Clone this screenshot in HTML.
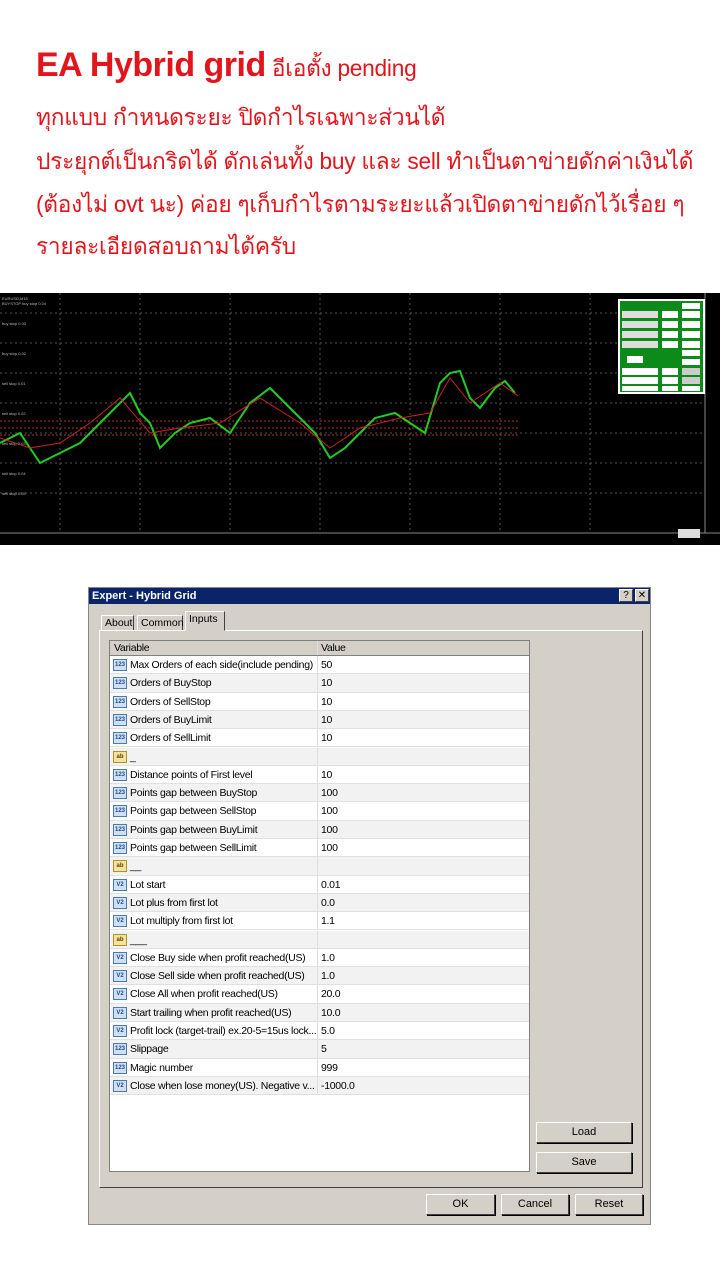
<!DOCTYPE html>
<html><head><meta charset="utf-8"><style>
*{margin:0;padding:0;box-sizing:border-box}
body{width:720px;height:1280px;background:#fff;position:relative;overflow:hidden;font-family:"Liberation Sans","DejaVu Sans",sans-serif}
.t{position:absolute;left:36px;color:#e3151c;font-size:22.7px;white-space:nowrap;letter-spacing:-0.25px}
.dlg{position:absolute;left:88px;top:587px;width:563px;height:638px;background:#d4d0c8;border:1px solid #888}
.tb{position:absolute;left:0;top:0;right:0;height:16px;background:#0a246a;color:#fff;font-weight:bold;font-size:11px;padding:2px 3px}
.tbb{position:absolute;top:1px;width:14px;height:13px;background:#d4d0c8;border:1px solid #fff;border-right-color:#404040;border-bottom-color:#404040;color:#000;font-size:10px;text-align:center;line-height:11px}
.tab{position:absolute;top:27px;height:16px;font-size:10.5px;padding:1px 3px;border:1px solid #fff;border-right-color:#404040;border-bottom:none;white-space:nowrap}
.panel{position:absolute;left:10px;top:42px;width:544px;height:558px;border:1px solid #fff;border-right-color:#404040;border-bottom-color:#404040}
.grid{position:absolute;left:20px;top:52px;width:421px;height:532px;background:#fff;border:1px solid #808080;overflow:hidden}
.row{position:absolute;left:0;width:419px;height:18.3px;border-bottom:1px solid #e0e0e0;font-size:10.5px;line-height:18px;white-space:nowrap;letter-spacing:-0.3px}
.row .v{position:absolute;left:0;width:208px;padding-left:20px;border-right:1px solid #ddd;height:100%;overflow:hidden}
.row .w{position:absolute;left:211px}
.ic{position:absolute;left:3px;top:3px;width:14px;height:12px;border:1px solid #4a7ab0;background:#cfe0f4;font-size:6px;line-height:10px;color:#1a4a8a;text-align:center;font-weight:bold;letter-spacing:0}
.ic.ab{background:#f4e39a;border-color:#b09030;color:#604000}
.btn{position:absolute;height:21px;background:#d4d0c8;border:1px solid #fff;border-right-color:#404040;border-bottom-color:#404040;box-shadow:1px 1px 0 #000;font-size:11px;text-align:center;line-height:19px}
</style></head><body>
<div class="t" style="top:46px;"><b style="font-size:34px;letter-spacing:-0.5px">EA Hybrid grid</b> อีเอตั้ง pending</div>
<div class="t" style="top:99px">ทุกแบบ กำหนดระยะ ปิดกำไรเฉพาะส่วนได้</div>
<div class="t" style="top:143px">ประยุกต์เป็นกริดได้ ดักเล่นทั้ง buy และ sell ทำเป็นตาข่ายดักค่าเงินได้</div>
<div class="t" style="top:186px">(ต้องไม่ ovt นะ) ค่อย ๆเก็บกำไรตามระยะแล้วเปิดตาข่ายดักไว้เรื่อย ๆ</div>
<div class="t" style="top:228px">รายละเอียดสอบถามได้ครับ</div>

<svg style="position:absolute;left:0;top:293px" width="720" height="252">
<rect width="720" height="252" fill="#000"/>
<g stroke="#555" stroke-dasharray="2,3" stroke-width="1">
<line x1="0" y1="20" x2="705" y2="20"/><line x1="0" y1="50" x2="705" y2="50"/><line x1="0" y1="80" x2="705" y2="80"/><line x1="0" y1="110" x2="705" y2="110"/><line x1="0" y1="140" x2="705" y2="140"/><line x1="0" y1="170" x2="705" y2="170"/><line x1="0" y1="200" x2="705" y2="200"/>
<line x1="60" y1="0" x2="60" y2="240"/><line x1="140" y1="0" x2="140" y2="240"/><line x1="230" y1="0" x2="230" y2="240"/><line x1="320" y1="0" x2="320" y2="240"/><line x1="410" y1="0" x2="410" y2="240"/><line x1="500" y1="0" x2="500" y2="240"/><line x1="590" y1="0" x2="590" y2="240"/>
</g>
<g fill="#bbb" font-size="4">
<text x="2" y="7">EURUSD,M15</text><text x="2" y="12">BUYSTOP buy stop 0.04</text><text x="2" y="32">buy stop 0.03</text><text x="2" y="62">buy stop 0.02</text><text x="2" y="92">sell stop 0.01</text><text x="2" y="122">sell stop 0.02</text><text x="2" y="152">sell stop 0.03</text><text x="2" y="182">sell stop 0.04</text><text x="2" y="202">sell stop 0.05</text>
</g>
<g stroke="#a33" stroke-dasharray="2,2"><line x1="0" y1="128" x2="520" y2="128"/><line x1="0" y1="135" x2="520" y2="135"/><line x1="0" y1="142" x2="520" y2="142"/></g>
<polyline fill="none" stroke="#2c2" stroke-width="2" points="0,150 20,140 40,170 60,160 80,150 100,130 115,115 130,100 140,120 150,130 160,155 175,140 190,130 210,125 230,140 250,110 270,95 285,110 300,125 315,140 330,165 345,155 360,140 375,125 395,120 410,130 425,140 440,90 450,80 460,78 470,105 480,115 495,95 505,88 515,100"/>
<polyline fill="none" stroke="#c22" stroke-width="1" points="0,145 30,155 60,150 90,130 120,105 150,140 180,135 220,130 260,105 300,130 330,155 360,135 400,125 430,120 450,85 470,110 500,90 518,103"/>
<rect x="705" y="0" width="15" height="252" fill="#000"/><line x1="705" y1="0" x2="705" y2="240" stroke="#888"/>
<line x1="0" y1="240" x2="720" y2="240" stroke="#888"/>
<rect x="618" y="6" width="87" height="95" fill="#fff"/><rect x="620" y="8" width="83" height="91" fill="#0c8a1a"/>
<g fill="#ddd"><rect x="622" y="18" width="36" height="7"/><rect x="622" y="28" width="36" height="7"/><rect x="622" y="38" width="36" height="7"/><rect x="622" y="48" width="36" height="7"/></g>
<g fill="#fff"><rect x="662" y="18" width="16" height="7"/><rect x="682" y="18" width="18" height="7"/><rect x="662" y="28" width="16" height="7"/><rect x="682" y="28" width="18" height="7"/><rect x="662" y="38" width="16" height="7"/><rect x="682" y="38" width="18" height="7"/><rect x="662" y="48" width="16" height="7"/><rect x="682" y="48" width="18" height="7"/><rect x="682" y="10" width="18" height="6"/><rect x="627" y="63" width="16" height="7"/><rect x="682" y="57" width="18" height="6"/><rect x="682" y="66" width="18" height="6"/>
<rect x="622" y="75" width="36" height="7"/><rect x="662" y="75" width="16" height="7"/><rect x="622" y="84" width="36" height="7"/><rect x="662" y="84" width="16" height="7"/><rect x="622" y="93" width="36" height="5"/><rect x="662" y="93" width="16" height="5"/><rect x="682" y="93" width="18" height="5"/></g>
<g fill="#ccc"><rect x="682" y="75" width="18" height="7"/><rect x="682" y="84" width="18" height="7"/></g>
<rect x="678" y="236" width="22" height="9" fill="#ddd"/>
</svg>

<div class="dlg">
<div class="tb">Expert - Hybrid Grid</div>
<div class="tbb" style="left:530px">?</div><div class="tbb" style="left:546px">✕</div>
<div class="tab" style="left:12px;width:33px">About</div>
<div class="tab" style="left:48px;width:46px">Common</div>
<div class="tab" style="left:96px;top:23px;height:20px;width:40px;background:#d4d0c8;z-index:2;border-bottom:1px solid #d4d0c8">Inputs</div>
<div class="panel"></div>
<div class="grid">
<div class="row" style="top:0;background:#d4d0c8;border-bottom:1px solid #808080;height:15px;line-height:14px"><div class="v" style="padding-left:4px">Variable</div><div class="w">Value</div></div>
</div>
<div class="btn" style="left:447px;top:534px;width:96px">Load</div>
<div class="btn" style="left:447px;top:564px;width:96px">Save</div>
<div class="btn" style="left:337px;top:606px;width:69px">OK</div>
<div class="btn" style="left:412px;top:606px;width:68px">Cancel</div>
<div class="btn" style="left:486px;top:606px;width:68px">Reset</div>
</div>
<script>
var r=[["1","Max Orders of each side(include pending)","50"],["1","Orders of BuyStop","10"],["1","Orders of SellStop","10"],["1","Orders of BuyLimit","10"],["1","Orders of SellLimit","10"],["a","_",""],["1","Distance points of First level","10"],["1","Points gap between BuyStop","100"],["1","Points gap between SellStop","100"],["1","Points gap between BuyLimit","100"],["1","Points gap between SellLimit","100"],["a","__",""],["v","Lot start","0.01"],["v","Lot plus from first lot","0.0"],["v","Lot multiply from first lot","1.1"],["a","___",""],["v","Close Buy side when profit reached(US)","1.0"],["v","Close Sell side when profit reached(US)","1.0"],["v","Close All when profit reached(US)","20.0"],["v","Start trailing when profit reached(US)","10.0"],["v","Profit lock (target-trail) ex.20-5=15us lock...","5.0"],["1","Slippage","5"],["1","Magic number","999"],["v","Close when lose money(US). Negative v...","-1000.0"]];
var g=document.querySelector('.grid'),h='';
r.forEach(function(x,i){var ic=x[0]=="a"?'<span class="ic ab">ab</span>':'<span class="ic">'+(x[0]=="1"?'123':'V2')+'</span>';
h+='<div class="row" style="top:'+(15+i*18.3)+'px;background:'+(i%2?'#f2f2f2':'#fff')+'"><div class="v">'+ic+x[1]+'</div><div class="w">'+x[2]+'</div></div>';});
g.insertAdjacentHTML('beforeend',h);
</script>
</body></html>
